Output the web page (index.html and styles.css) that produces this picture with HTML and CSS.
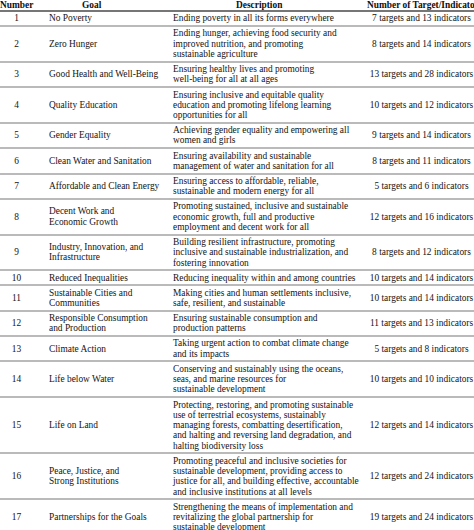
FILE: index.html
```html
<!DOCTYPE html>
<html lang="en">
<head>
<meta charset="utf-8">
<title>Sustainable Development Goals</title>
<link rel="stylesheet" href="styles.css">
</head>
<body>
<table class="sdg">
  <colgroup>
    <col class="c-num">
    <col class="c-goal">
    <col class="c-desc">
    <col class="c-tgt">
  </colgroup>
  <thead>
    <tr>
      <th class="h-num">Number</th>
      <th class="h-goal">Goal</th>
      <th class="h-desc">Description</th>
      <th class="h-tgt">Number of Target/Indicators</th>
    </tr>
  </thead>
  <tbody>
    <tr><td class="num">1</td><td class="goal">No Poverty</td><td class="desc">Ending poverty in all its forms everywhere</td><td class="tgt">7 targets and 13 indicators</td></tr>
    <tr><td class="num">2</td><td class="goal">Zero Hunger</td><td class="desc">Ending hunger, achieving food security and<br>improved nutrition, and promoting<br>sustainable agriculture</td><td class="tgt">8 targets and 14 indicators</td></tr>
    <tr><td class="num">3</td><td class="goal">Good Health and Well-Being</td><td class="desc">Ensuring healthy lives and promoting<br>well-being for all at all ages</td><td class="tgt">13 targets and 28 indicators</td></tr>
    <tr><td class="num">4</td><td class="goal">Quality Education</td><td class="desc">Ensuring inclusive and equitable quality<br>education and promoting lifelong learning<br>opportunities for all</td><td class="tgt">10 targets and 12 indicators</td></tr>
    <tr><td class="num">5</td><td class="goal">Gender Equality</td><td class="desc">Achieving gender equality and empowering all<br>women and girls</td><td class="tgt">9 targets and 14 indicators</td></tr>
    <tr><td class="num">6</td><td class="goal">Clean Water and Sanitation</td><td class="desc">Ensuring availability and sustainable<br>management of water and sanitation for all</td><td class="tgt">8 targets and 11 indicators</td></tr>
    <tr><td class="num">7</td><td class="goal">Affordable and Clean Energy</td><td class="desc">Ensuring access to affordable, reliable,<br>sustainable and modern energy for all</td><td class="tgt">5 targets and 6 indicators</td></tr>
    <tr><td class="num">8</td><td class="goal">Decent Work and<br>Economic Growth</td><td class="desc">Promoting sustained, inclusive and sustainable<br>economic growth, full and productive<br>employment and decent work for all</td><td class="tgt">12 targets and 16 indicators</td></tr>
    <tr><td class="num">9</td><td class="goal">Industry, Innovation, and<br>Infrastructure</td><td class="desc">Building resilient infrastructure, promoting<br>inclusive and sustainable industrialization, and<br>fostering innovation</td><td class="tgt">8 targets and 12 indicators</td></tr>
    <tr><td class="num">10</td><td class="goal">Reduced Inequalities</td><td class="desc">Reducing inequality within and among countries</td><td class="tgt">10 targets and 14 indicators</td></tr>
    <tr><td class="num">11</td><td class="goal">Sustainable Cities and<br>Communities</td><td class="desc">Making cities and human settlements inclusive,<br>safe, resilient, and sustainable</td><td class="tgt">10 targets and 14 indicators</td></tr>
    <tr><td class="num">12</td><td class="goal">Responsible Consumption<br>and Production</td><td class="desc">Ensuring sustainable consumption and<br>production patterns</td><td class="tgt">11 targets and 13 indicators</td></tr>
    <tr><td class="num">13</td><td class="goal">Climate Action</td><td class="desc">Taking urgent action to combat climate change<br>and its impacts</td><td class="tgt">5 targets and 8 indicators</td></tr>
    <tr><td class="num">14</td><td class="goal">Life below Water</td><td class="desc">Conserving and sustainably using the oceans,<br>seas, and marine resources for<br>sustainable development</td><td class="tgt">10 targets and 10 indicators</td></tr>
    <tr><td class="num">15</td><td class="goal">Life on Land</td><td class="desc">Protecting, restoring, and promoting sustainable<br>use of terrestrial ecosystems, sustainably<br>managing forests, combatting desertification,<br>and halting and reversing land degradation, and<br>halting biodiversity loss</td><td class="tgt">12 targets and 14 indicators</td></tr>
    <tr><td class="num">16</td><td class="goal">Peace, Justice, and<br>Strong Institutions</td><td class="desc">Promoting peaceful and inclusive societies for<br>sustainable development, providing access to<br>justice for all, and building effective, accountable<br>and inclusive institutions at all levels</td><td class="tgt">12 targets and 24 indicators</td></tr>
    <tr><td class="num">17</td><td class="goal">Partnerships for the Goals</td><td class="desc">Strengthening the means of implementation and<br>revitalizing the global partnership for<br>sustainable development</td><td class="tgt">19 targets and 24 indicators</td></tr>
  </tbody>
</table>
</body>
</html>
```

FILE: styles.css
```css
html, body {
  margin: 0;
  padding: 0;
  background: #ffffff;
  overflow: hidden;
}

body {
  font-family: "Liberation Serif", "Times New Roman", serif;
  font-size: 9.4px;
  color: #141414;
}

.sdg {
  border-collapse: collapse;
  table-layout: fixed;
  width: 480px;
}

.c-num { width: 33px; }
.c-goal { width: 136px; }
.c-desc { width: 194px; }
.c-tgt { width: 117px; }

.sdg th {
  font-weight: bold;
  line-height: 10px;
  padding: 0;
  text-align: left;
  white-space: nowrap;
  border-bottom: 2px solid #767676;
  color: #0e0e0e;
}

.sdg th.h-num { text-align: center; }
.sdg th.h-goal { padding-left: 49px; }
.sdg th.h-desc { padding-left: 67px; }
.sdg th.h-tgt { padding-left: 4px; }

.sdg td {
  padding: 1.4px 0;
  line-height: 10.3px;
  vertical-align: middle;
  white-space: nowrap;
  border-bottom: 2px solid #bababa;
}

.sdg td.num { text-align: center; }
.sdg td.goal { padding-left: 16px; }
.sdg td.desc { padding-left: 4px; }
.sdg td.tgt { text-align: center; }
```
